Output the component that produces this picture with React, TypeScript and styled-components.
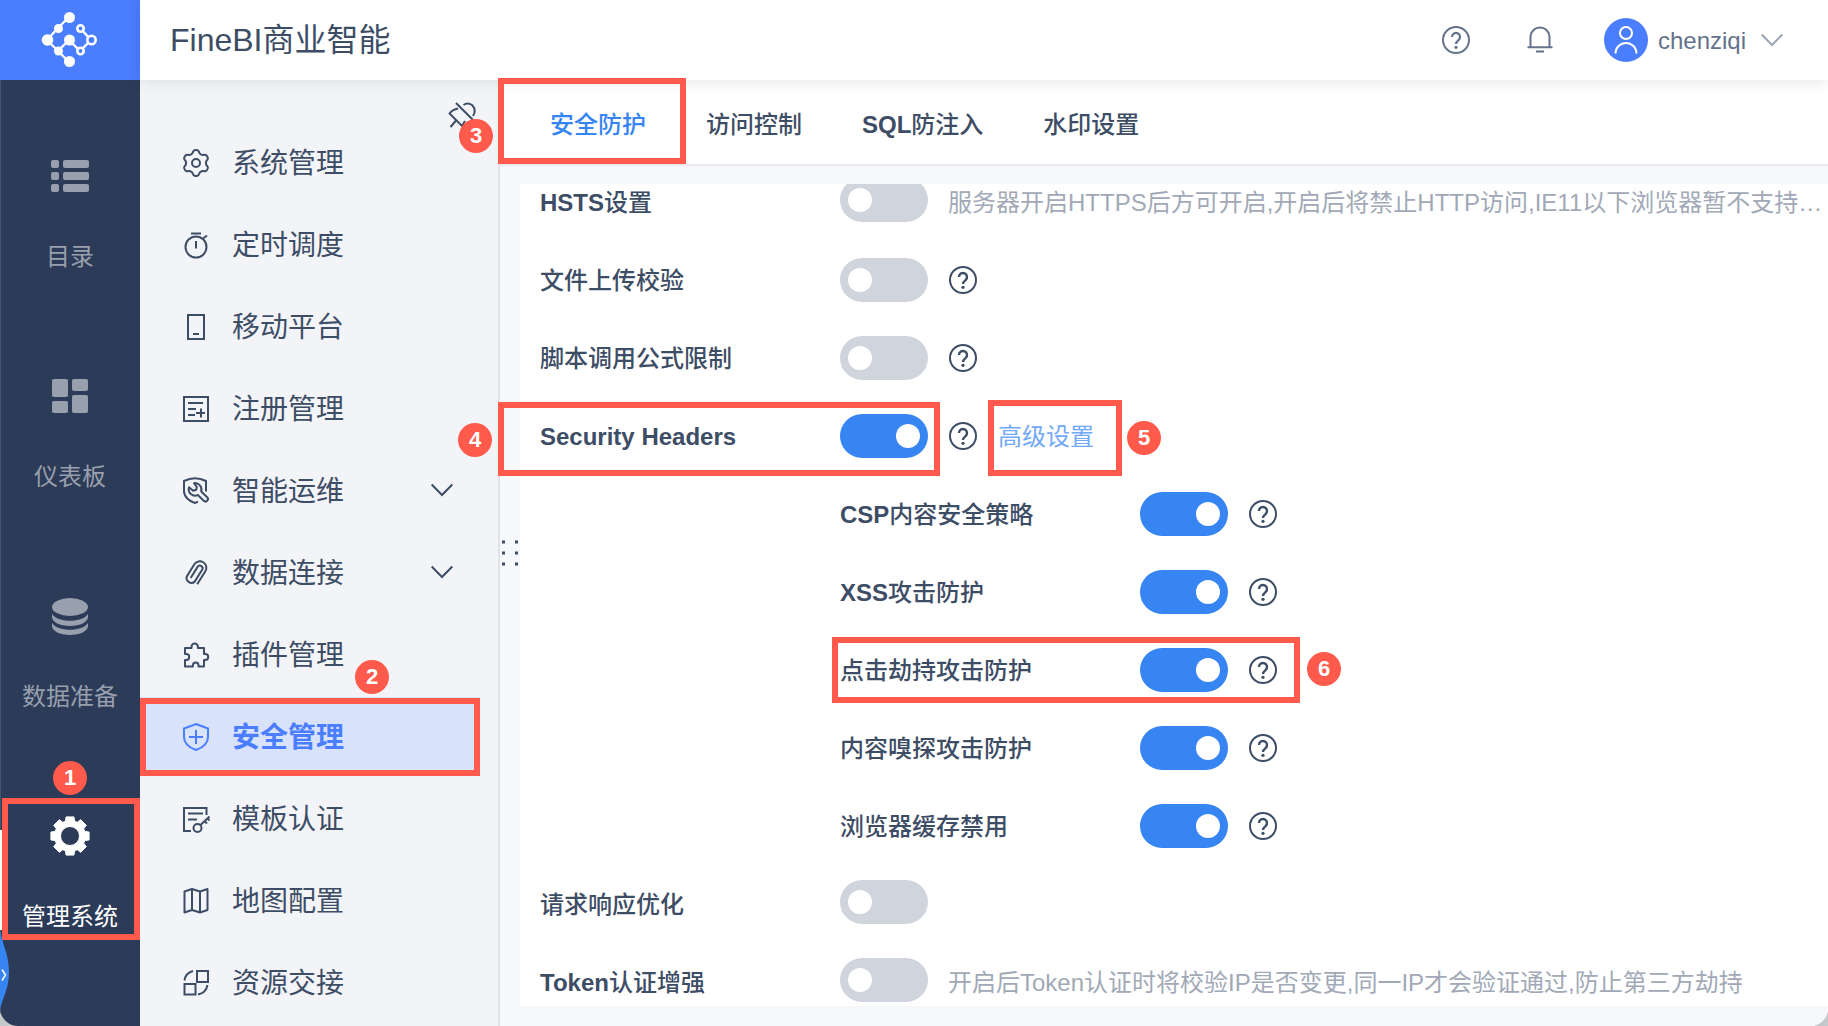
import React from 'react';
import styled, { createGlobalStyle } from 'styled-components';

const ink = '#3d4d66';
const blue = '#3685f2';
const brand = '#4b7eff';
const red = '#ff5a4c';

const GlobalStyle = createGlobalStyle`
  *, *::before, *::after { box-sizing: border-box; }
  body {
    margin: 0;
    background: #c6c7c9;
    color: ${ink};
    font-family: "Liberation Sans", "Noto Sans CJK SC", sans-serif;
    font-size: 24px;
    line-height: 32px;
  }
  button, input { font: inherit; color: inherit; }
  button { padding: 0; border: 0; background: none; cursor: pointer; }
  a { color: inherit; text-decoration: none; }
  svg { display: block; overflow: visible; flex: none; }
`;

/* ---------- shell ---------- */

const Shell = styled.div`
  position: relative;
  display: grid;
  grid-template-columns: 140px minmax(0, 1fr);
  height: 100vh;
  overflow: hidden;
  border-radius: 0 0 18px 18px;
  background: #fff;
`;

const Rail = styled.nav`
  position: relative;
  display: flex;
  flex-direction: column;
  background: #2c3b57;
  box-shadow: inset 1px 0 #46546e;
`;

const Brand = styled.a`
  display: block;
  height: 80px;
  margin-bottom: 30px;
  background: ${brand};
`;

const RailItem = styled.a<{ $active?: boolean }>`
  display: flex;
  flex: none;
  flex-direction: column;
  align-items: center;
  gap: 45px;
  height: 220px;
  padding-top: 46px;
  color: ${(p) => (p.$active ? '#fff' : '#989fad')};
  background: ${(p) =>
    p.$active ? 'linear-gradient(#fff, #fff) 0 60px / 2px 100px no-repeat' : 'none'};
`;

const Drawer = styled.button`
  position: absolute;
  left: 0;
  bottom: 16px;
  width: 10px;
  height: 80px;
`;

const Page = styled.div`
  display: flex;
  flex-direction: column;
  min-width: 0;
  min-height: 0;
`;

const Header = styled.header`
  position: relative;
  z-index: 1;
  display: flex;
  flex: none;
  align-items: center;
  height: 80px;
  padding: 0 45px 0 30px;
  background: #fff;
  box-shadow: 0 0 16px rgba(0, 0, 0, 0.12);
`;

const Title = styled.h1`
  flex: 1;
  margin: 0;
  font-size: 32px;
  font-weight: 400;
  line-height: 40px;
`;

const Tools = styled.div`
  display: flex;
  align-items: center;
  color: #64738b;
`;

const ToolButton = styled.button`
  width: 28px;
  height: 28px;
  margin-right: 56px;
`;

const User = styled.button`
  display: flex;
  align-items: center;
  gap: 10px;
  margin-left: -6px;
`;

const Avatar = styled.span`
  display: grid;
  place-items: center;
  width: 44px;
  height: 44px;
  border-radius: 50%;
  background: ${brand};
  color: #fff;
`;

const UserName = styled.span`
  margin-right: 5px;
  padding-top: 2px;
`;

const Body = styled.div`
  display: flex;
  flex: 1;
  min-height: 0;
`;

/* ---------- side menu ---------- */

const Side = styled.aside`
  display: flex;
  flex: none;
  flex-direction: column;
  width: 358px;
  padding: 20px 18px 0 0;
  background: #f3f4f8;
  overflow: hidden;
`;

const PinButton = styled.button`
  align-self: flex-end;
  flex: none;
  width: 33px;
  height: 23px;
`;

const Menu = styled.nav`
  display: flex;
  flex-direction: column;
  gap: 4px;
`;

const MenuItem = styled.a<{ $active?: boolean }>`
  display: flex;
  flex: none;
  align-items: center;
  gap: 22px;
  height: 78px;
  padding: 0 27px 0 42px;
  font-size: 28px;
  line-height: 36px;
  font-weight: ${(p) => (p.$active ? 700 : 400)};
  color: ${(p) => (p.$active ? brand : 'inherit')};
  background: ${(p) => (p.$active ? '#d8e2fa' : 'none')};
`;

const MenuText = styled.span`
  flex: 1;
  padding-top: 3px;
`;

const Splitter = styled.div`
  position: relative;
  flex: none;
  width: 2px;
  background: #dfe2e9;
`;

const Grip = styled.span`
  position: absolute;
  top: 50%;
  left: 4px;
  display: grid;
  grid-template-columns: 3px 3px;
  gap: 8px 10px;
  transform: translateY(-50%);
`;

const GripDot = styled.i`
  height: 3px;
  background: ${ink};
`;

/* ---------- main area ---------- */

const Main = styled.main`
  display: flex;
  flex: 1;
  flex-direction: column;
  min-width: 0;
  background: #f7f8fa;
`;

const Tabs = styled.div`
  display: flex;
  flex: none;
  align-items: center;
  gap: 60px;
  height: 86px;
  padding: 6px 50px 0;
  border-bottom: 2px solid #e8eaef;
  background: #fff;
`;

const Tab = styled.button<{ $active?: boolean }>`
  font-weight: 500;
  color: ${(p) => (p.$active ? blue : ink)};
`;

const Panel = styled.section`
  flex: 1;
  min-height: 0;
  margin: 18px 0 20px 20px;
  overflow: hidden;
  background: #fff;
`;

const Rows = styled.div`
  display: flex;
  flex-direction: column;
  margin-top: -21px;
  padding-left: 20px;
`;

const Row = styled.div<{ $nested?: boolean; $raised?: boolean }>`
  display: grid;
  grid-template-columns: 300px 88px minmax(0, 1fr);
  align-items: center;
  height: 78px;
  padding-left: ${(p) => (p.$nested ? 300 : 0)}px;

  input {
    margin-bottom: ${(p) => (p.$raised ? 4 : 0)}px;
  }
`;

const Label = styled.label`
  padding-top: 2px;
  font-weight: 500;

  b { font-weight: 700; }
`;

const Switch = styled.input`
  appearance: none;
  width: 88px;
  height: 44px;
  margin: 0;
  padding: 10px 8px;
  border-radius: 22px;
  background: #d0d4dc;
  cursor: pointer;

  &::before {
    content: "";
    display: block;
    width: 24px;
    height: 24px;
    border-radius: 50%;
    background: #fff;
  }
  &:checked { background: ${blue}; }
  &:checked::before { margin-left: auto; }
`;

const Extra = styled.div`
  display: flex;
  align-items: center;
  gap: 20px;
  padding-left: 20px;
`;

const HelpButton = styled.button`
  width: 30px;
  height: 30px;
  padding: 1px;
`;

const Hint = styled.span`
  overflow: hidden;
  padding-top: 2px;
  color: #a1a9b7;
  white-space: nowrap;
`;

const Link = styled.a`
  padding-top: 2px;
  color: #72a9f7;
`;

/* ---------- tour marks over the page ---------- */

const Marks = styled.div`
  position: absolute;
  inset: 0;
  z-index: 2;
  pointer-events: none;
`;

const Frame = styled.div<{ $x: number; $y: number; $w: number; $h: number }>`
  position: absolute;
  left: ${(p) => p.$x}px;
  top: ${(p) => p.$y}px;
  width: ${(p) => p.$w}px;
  height: ${(p) => p.$h}px;
  border: 6px solid ${red};
`;

const Step = styled.span<{ $x: number; $y: number }>`
  position: absolute;
  left: ${(p) => p.$x}px;
  top: ${(p) => p.$y}px;
  width: 34px;
  height: 34px;
  border-radius: 50%;
  background: ${red};
  color: #fff;
  font-size: 22px;
  font-weight: 700;
  line-height: 34px;
  text-align: center;
`;

/* ---------- icons ---------- */

const polar = (cx: number, cy: number, r: number, deg: number) => {
  const a = ((deg - 90) * Math.PI) / 180;
  return `${(cx + r * Math.cos(a)).toFixed(2)} ${(cy + r * Math.sin(a)).toFixed(2)}`;
};

const softGear =
  'M' +
  Array.from({ length: 120 }, (_, i) =>
    polar(14, 15, 11.5 + 1.6 * Math.tanh(1.6 * Math.cos((i * 18 * Math.PI) / 180)), i * 3),
  ).join('L') +
  'Z';

const cog =
  'M' +
  Array.from({ length: 8 }, (_, i) =>
    [[-19, 15.5], [-13, 19.5], [13, 19.5], [19, 15.5]]
      .map(([d, r]) => polar(20, 20, r, i * 45 + d * 0.9))
      .join('L'),
  ).join('L') +
  'Z';

const Line = ({ children, size = 28, width = 2 }: { children: React.ReactNode; size?: number; width?: number }) => (
  <svg width={size} height={size} viewBox={`0 0 ${size} ${size}`} fill="none" stroke="currentColor" strokeWidth={width} aria-hidden>
    {children}
  </svg>
);

const HelpIcon = ({ heavy }: { heavy?: boolean }) => (
  <Line>
    <circle cx="14" cy="14" r="13" />
    <path d="M10 11a4 4 0 1 1 6.6 3c-1.7 1.4-2.6 2.1-2.6 4" strokeWidth={heavy ? 2.4 : 2.2} />
    <circle cx="14" cy="21.3" r="1.6" fill="currentColor" stroke="none" />
  </Line>
);

const Chevron = ({ color = 'currentColor' }: { color?: string }) => (
  <svg width="22" height="14" viewBox="0 0 22 14" fill="none" stroke={color} strokeWidth="2" aria-hidden>
    <path d="M.7 1.5 11 12 21.3 1.5" />
  </svg>
);

const Logo = () => (
  <svg width="140" height="80" viewBox="0 0 140 80" fill="#fff" stroke="#fff" aria-hidden>
    <path d="M69 17 58 28 47 40 58 51 69 62M58 51 69 40 80 51 91 40 80 28" fill="none" strokeWidth="2.4" />
    <g stroke="none">
      <circle cx="69.5" cy="17.5" r="5.5" />
      <circle cx="47.5" cy="40" r="5.8" />
      <circle cx="69.5" cy="40" r="5.5" />
      <circle cx="69.5" cy="61.5" r="5.5" />
      <circle cx="58.5" cy="28.5" r="4.5" />
      <circle cx="58.5" cy="51" r="4.5" />
    </g>
    <g fill={brand} strokeWidth="2.6">
      <circle cx="80.5" cy="28.5" r="3.2" />
      <circle cx="91.5" cy="40" r="4.2" />
      <circle cx="80.5" cy="51" r="3.2" />
    </g>
  </svg>
);

const railIcons = {
  list: (
    <>
      {[4, 16, 28].map((y) => (
        <g key={y}>
          <rect x="1" y={y} width="8" height="8" rx="2" />
          <rect x="13" y={y} width="26" height="8" rx="2" />
        </g>
      ))}
    </>
  ),
  board: (
    <>
      <rect x="2" y="3" width="16" height="18" rx="2" />
      <rect x="2" y="25" width="16" height="12" rx="2" />
      <rect x="22" y="3" width="16" height="12" rx="2" />
      <rect x="22" y="19" width="16" height="18" rx="2" />
    </>
  ),
  data: (
    <>
      <ellipse cx="20" cy="11" rx="18" ry="9" />
      <path d="M2 18c3 4.5 10 6.8 18 6.800S35 22.500 38 18v3c0 5-8 9-18 9S2 26 2 21z" />
      <path d="M2 27c3 4.5 10 6.8 18 6.800S35 31.500 38 27v3c0 5-8 9-18 9S2 35 2 30z" />
    </>
  ),
  cog: (
    <path
      fillRule="evenodd"
      stroke="currentColor"
      strokeLinejoin="round"
      d={`${cog}M20 10.500a9.500 9.500 0 1 0 0 19a9.500 9.500 0 1 0 0-19Z`}
    />
  ),
};

const menuIcons = {
  gear: (
    <>
      <path d={softGear} />
      <circle cx="14" cy="15" r="4" />
    </>
  ),
  timer: (
    <>
      <circle cx="14" cy="17" r="10.5" />
      <path d="M9 3.500h10M14 11v7.500M20.500 9 25 5.500" />
    </>
  ),
  phone: <path d="M6 3h16v24H6zM11 22h6" />,
  form: <path d="M2 3h24v24H2zM6 9h15M6 15h8M6 21h7M14 19h9M19 14.500v9" />,
  ops: (
    <>
      <path d="M24 15.500V5Q13-.4 2 5v11Q3 23.500 13 27l3-1.200" />
      <path d="M12 7.200a6.400 6.400 0 0 1 7.200 8.300l6 5.800a2.400 2.400 0 0 1-3.400 3.400L15.800 19A6.400 6.400 0 0 1 7 11.200l4.200 3.600 3-1 .6-3z" strokeLinejoin="round" />
    </>
  ),
  clip: (
    <path
      transform="rotate(32 14 15)"
      d="M21 24V8.500a6.500 6.500 0 0 0-13 0V23a5 5 0 0 0 9.500 0V9a2.700 2.700 0 0 0-5.400 0v13"
    />
  ),
  puzzle: (
    <path
      strokeLinejoin="round"
      d="M3 8h6.500V6.700a3.200 3.200 0 0 1 6.400 0V8H22v6h1.200a3 3 0 0 1 0 6H22v6.500h-5.500v-1.200a2.800 2.800 0 0 0-5.600 0v1.200H3V20h1.200a3 3 0 0 0 0-6H3z"
    />
  ),
  shield: (
    <path d="M14 2l12 4.500V15c0 6-5 10.500-12 13C7 25.500 2 21 2 15V6.500zM7 15h14M14 8v14" />
  ),
  key: (
    <>
      <path d="M24.500 11V4H2v23h7M6 9.500h15M6 15.500h9" />
      <circle cx="15.5" cy="24" r="4" />
      <path d="M18.500 21 27.500 12.500M22.500 17l2.500 2.500M25.500 14.500l2 2" />
    </>
  ),
  map: <path d="M2.500 5.500 10 3l8 2.500L25.500 3v21L18 26.500 10 24l-7.500 2.500zM10 3v21M18 5.500v21" strokeLinejoin="round" />,
  swap: <path d="M15 3h11v11H15zM2.500 16h11v10.500h-11zM2.500 12.500Q3.500 5 11 3M25.500 17q-1.500 8-9.500 9.500" />,
};

/* ---------- data ---------- */

const rail: { text: string; icon: keyof typeof railIcons; active?: boolean }[] = [
  { text: '目录', icon: 'list' },
  { text: '仪表板', icon: 'board' },
  { text: '数据准备', icon: 'data' },
  { text: '管理系统', icon: 'cog', active: true },
];

const menu: { text: string; icon: keyof typeof menuIcons; active?: boolean; more?: boolean }[] = [
  { text: '系统管理', icon: 'gear' },
  { text: '定时调度', icon: 'timer' },
  { text: '移动平台', icon: 'phone' },
  { text: '注册管理', icon: 'form' },
  { text: '智能运维', icon: 'ops', more: true },
  { text: '数据连接', icon: 'clip', more: true },
  { text: '插件管理', icon: 'puzzle' },
  { text: '安全管理', icon: 'shield', active: true },
  { text: '模板认证', icon: 'key' },
  { text: '地图配置', icon: 'map' },
  { text: '资源交接', icon: 'swap' },
];

const tabs = [
  { latin: '', text: '安全防护' },
  { latin: '', text: '访问控制' },
  { latin: 'SQL', text: '防注入' },
  { latin: '', text: '水印设置' },
];

type Setting = {
  id: string;
  latin?: string;
  text?: string;
  on?: boolean;
  nested?: boolean;
  help?: boolean;
  hint?: string;
  link?: string;
};

const settings: Setting[] = [
  { id: 'hsts', latin: 'HSTS', text: '设置', hint: '服务器开启HTTPS后方可开启,开启后将禁止HTTP访问,IE11以下浏览器暂不支持…' },
  { id: 'upload', text: '文件上传校验', help: true },
  { id: 'script', text: '脚本调用公式限制', help: true },
  { id: 'headers', latin: 'Security Headers', on: true, help: true, link: '高级设置' },
  { id: 'csp', latin: 'CSP', text: '内容安全策略', on: true, nested: true, help: true },
  { id: 'xss', latin: 'XSS', text: '攻击防护', on: true, nested: true, help: true },
  { id: 'click', text: '点击劫持攻击防护', on: true, nested: true, help: true },
  { id: 'sniff', text: '内容嗅探攻击防护', on: true, nested: true, help: true },
  { id: 'cache', text: '浏览器缓存禁用', on: true, nested: true, help: true },
  { id: 'response', text: '请求响应优化' },
  { id: 'token', latin: 'Token', text: '认证增强', hint: '开启后Token认证时将校验IP是否变更,同一IP才会验证通过,防止第三方劫持' },
];

const frames = [
  [2, 798, 138, 142],
  [140, 698, 340, 78],
  [498, 78, 188, 86],
  [498, 402, 442, 74],
  [988, 400, 134, 76],
  [832, 637, 468, 66],
];

const steps = [
  [53, 761],
  [355, 660],
  [459, 119],
  [458, 423],
  [1127, 421],
  [1307, 652],
];

export default function App() {
  return (
    <Shell>
      <GlobalStyle />
      <Rail>
        <Brand href="#" aria-label="FineBI">
          <Logo />
        </Brand>
        {rail.map((item) => (
          <RailItem key={item.text} href="#" $active={item.active}>
            <svg width="40" height="40" viewBox="0 0 40 40" fill="currentColor" aria-hidden>
              {railIcons[item.icon]}
            </svg>
            {item.text}
          </RailItem>
        ))}
        <Drawer type="button" aria-label="open">
          <svg width="10" height="80" viewBox="0 0 10 80" fill="none" aria-hidden>
            <path d="M0 0C2 14 9 24 9 42 9 60 2 68 0 80z" fill={blue} />
            <path d="M2 39.500 5.500 45 2 50.500" stroke="#fff" strokeWidth="1.5" />
          </svg>
        </Drawer>
      </Rail>

      <Page>
        <Header>
          <Title>FineBI商业智能</Title>
          <Tools>
            <ToolButton type="button" aria-label="help">
              <HelpIcon />
            </ToolButton>
            <ToolButton type="button" aria-label="notifications">
              <Line>
                <path d="M4.500 21V11a9.500 9.500 0 0 1 19 0v10M1.500 21.200h25M10 25.500h8" />
              </Line>
            </ToolButton>
            <User type="button">
              <Avatar>
                <Line width={2}>
                  <circle cx="14" cy="7" r="6" />
                  <path d="M3.500 27.500a10.500 10.500 0 0 1 21 0" />
                </Line>
              </Avatar>
              <UserName>chenziqi</UserName>
              <Chevron color="#9aa5b5" />
            </User>
          </Tools>
        </Header>

        <Body>
          <Side>
            <PinButton type="button" aria-label="unpin">
              <Line size={30}>
                <path d="M9 3 28 22M16.500 5q4-3 8.500 0 5 5 1 11M11 8.500Q5.500 9.500 2.500 13.500L15 26l3-5M9 20.500 3.500 27" />
              </Line>
            </PinButton>
            <Menu>
              {menu.map((item) => (
                <MenuItem key={item.text} href="#" $active={item.active}>
                  <Line>{menuIcons[item.icon]}</Line>
                  <MenuText>{item.text}</MenuText>
                  {item.more && <Chevron />}
                </MenuItem>
              ))}
            </Menu>
          </Side>
          <Splitter>
            <Grip>
              {[0, 1, 2, 3, 4, 5].map((i) => (
                <GripDot key={i} />
              ))}
            </Grip>
          </Splitter>

          <Main>
            <Tabs role="tablist">
              {tabs.map((tab, i) => (
                <Tab key={tab.text} type="button" role="tab" aria-selected={i === 0} $active={i === 0}>
                  {tab.latin && <b>{tab.latin}</b>}
                  {tab.text}
                </Tab>
              ))}
            </Tabs>
            <Panel>
              <Rows>
                {settings.map((s) => (
                  <Row key={s.id} $nested={s.nested} $raised={!s.help}>
                    <Label htmlFor={s.id}>
                      {s.latin && <b>{s.latin}</b>}
                      {s.text}
                    </Label>
                    <Switch id={s.id} type="checkbox" role="switch" defaultChecked={s.on} />
                    <Extra>
                      {s.help && (
                        <HelpButton type="button" aria-label="help">
                          <HelpIcon heavy />
                        </HelpButton>
                      )}
                      {s.link && <Link href="#">{s.link}</Link>}
                      {s.hint && <Hint>{s.hint}</Hint>}
                    </Extra>
                  </Row>
                ))}
              </Rows>
            </Panel>
          </Main>
        </Body>
      </Page>

      <Marks>
        {frames.map(([x, y, w, h]) => (
          <Frame key={`${x}-${y}`} $x={x} $y={y} $w={w} $h={h} />
        ))}
        {steps.map(([x, y], i) => (
          <Step key={i} $x={x} $y={y}>
            {i + 1}
          </Step>
        ))}
      </Marks>
    </Shell>
  );
}
